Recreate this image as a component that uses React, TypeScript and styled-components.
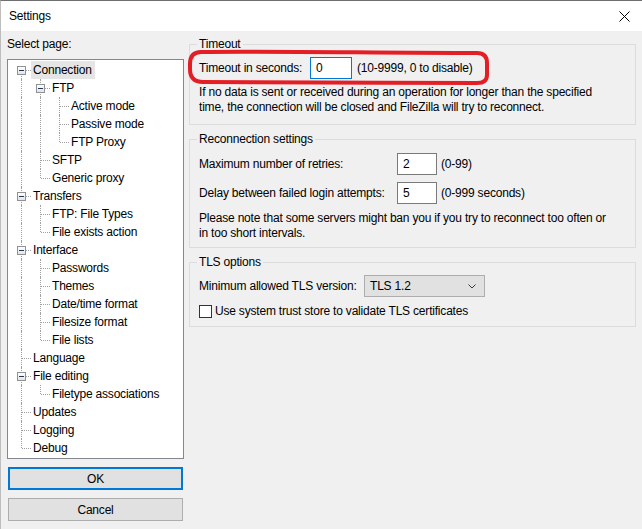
import React from "react";
import styled, { createGlobalStyle, css } from "styled-components";

interface TreeNode {
  label: string;
  selected?: boolean;
  children?: TreeNode[];
}

interface FlatRow {
  label: string;
  selected?: boolean;
  guides: boolean[];
  hasChildren: boolean;
  hasNext: boolean;
  isFirstRoot: boolean;
}

const pages: TreeNode[] = [
  {
    label: "Connection",
    selected: true,
    children: [
      {
        label: "FTP",
        children: [
          { label: "Active mode" },
          { label: "Passive mode" },
          { label: "FTP Proxy" },
        ],
      },
      { label: "SFTP" },
      { label: "Generic proxy" },
    ],
  },
  {
    label: "Transfers",
    children: [{ label: "FTP: File Types" }, { label: "File exists action" }],
  },
  {
    label: "Interface",
    children: [
      { label: "Passwords" },
      { label: "Themes" },
      { label: "Date/time format" },
      { label: "Filesize format" },
      { label: "File lists" },
    ],
  },
  { label: "Language" },
  { label: "File editing", children: [{ label: "Filetype associations" }] },
  { label: "Updates" },
  { label: "Logging" },
  { label: "Debug" },
];

const flatten = (nodes: TreeNode[], guides: boolean[] = []): FlatRow[] =>
  nodes.flatMap((node, i) => {
    const hasNext = i < nodes.length - 1;
    const row: FlatRow = {
      label: node.label,
      selected: node.selected,
      guides,
      hasChildren: !!node.children,
      hasNext,
      isFirstRoot: guides.length === 0 && i === 0,
    };
    return [row, ...(node.children ? flatten(node.children, [...guides, hasNext]) : [])];
  });

const rows = flatten(pages);

const App: React.FC = () => {
  return (
    <>
      <GlobalStyle />
      <Window>
        <TitleBar>
          <Title>Settings</Title>
          <CloseButton>
            <svg width="11" height="11" viewBox="0 0 11 11">
              <path d="M0.5 0.5 L10.5 10.5 M10.5 0.5 L0.5 10.5" stroke="#000" strokeWidth="1" />
            </svg>
          </CloseButton>
        </TitleBar>

        <Body>
          <Sidebar>
            <SectionLabel>Select page:</SectionLabel>
            <TreeBox>
              {rows.map((row) => (
                <TreeRow key={row.label}>
                  {row.guides.map((line, i) => (
                    <Guide key={i} $line={line} />
                  ))}
                  <Branch $top={!row.isFirstRoot} $bottom={row.hasNext}>
                    {row.hasChildren && <Expander />}
                  </Branch>
                  <TreeLabel $selected={row.selected}>{row.label}</TreeLabel>
                </TreeRow>
              ))}
            </TreeBox>
            <DialogButton $default>OK</DialogButton>
            <DialogButton>Cancel</DialogButton>
          </Sidebar>

          <Pages>
            <Group>
              <Legend>Timeout</Legend>
              <FieldRow>
                <FieldLabel $width={104}>Timeout in seconds:</FieldLabel>
                <TextBox $focused $width={42} $gap={7}>0</TextBox>
                <Hint $gap={5}>(10-9999, 0 to disable)</Hint>
              </FieldRow>
              <Note>
                If no data is sent or received during an operation for longer than the specified
                <br />
                time, the connection will be closed and FileZilla will try to reconnect.
              </Note>
            </Group>

            <Group $pad={6}>
              <Legend>Reconnection settings</Legend>
              <FieldGrid>
                <FieldLabel>Maximum number of retries:</FieldLabel>
                <TextBox $width={40} $gap={8}>2</TextBox>
                <Hint $gap={4}>(0-99)</Hint>
                <FieldLabel>Delay between failed login attempts:</FieldLabel>
                <TextBox $width={40} $gap={8}>5</TextBox>
                <Hint $gap={4}>(0-999 seconds)</Hint>
              </FieldGrid>
              <Note $gap={7}>
                Please note that some servers might ban you if you try to reconnect too often or
                <br />
                in too short intervals.
              </Note>
            </Group>

            <Group $pad={7}>
              <Legend>TLS options</Legend>
              <FieldRow>
                <FieldLabel $width={157}>Minimum allowed TLS version:</FieldLabel>
                <Select>
                  <span>TLS 1.2</span>
                  <svg width="8" height="5" viewBox="0 0 8 5">
                    <path d="M0.5 0.5 L4 4 L7.5 0.5" fill="none" stroke="#3c3c3c" strokeWidth="1" />
                  </svg>
                </Select>
              </FieldRow>
              <CheckRow>
                <CheckBox />
                <span>Use system trust store to validate TLS certificates</span>
              </CheckRow>
            </Group>
          </Pages>
        </Body>

        <Annotation width="310" height="42" viewBox="0 0 310 42">
          <path
            d="M16 5 C 80 4, 200 6, 292 6 Q 302 6 302 16 L 302 28 Q 302 36 292 36 C 200 36, 90 35, 18 35 Q 5 35 5 22 L 5 17 Q 5 5 16 5 Z"
            fill="none"
            stroke="#e41e25"
            strokeWidth="4"
            strokeLinejoin="round"
          />
        </Annotation>
      </Window>
    </>
  );
};

const GlobalStyle = createGlobalStyle`
  html, body {
    margin: 0;
    padding: 0;
    background: #f0f0f0;
  }
  body {
    font-family: "Segoe UI", "Liberation Sans", Arial, sans-serif;
    font-size: 12px;
    letter-spacing: -0.2px;
    color: #000;
  }
`;

const Window = styled.div`
  position: relative;
  width: 642px;
  height: 529px;
  box-sizing: border-box;
  background: #f0f0f0;
  border-top: 1px solid #6f6f6f;
  border-left: 1px solid #bdbdbd;
  overflow: hidden;
`;

const TitleBar = styled.div`
  display: flex;
  align-items: center;
  justify-content: space-between;
  height: 30px;
  background: #fff;
  padding-left: 8px;
`;

const Title = styled.div`
  font-size: 12px;
  line-height: 16px;
`;

const CloseButton = styled.div`
  display: flex;
  align-items: center;
  justify-content: center;
  width: 46px;
  height: 30px;
  margin-right: -1px;
  padding-left: 8px;
  box-sizing: border-box;
`;

const Body = styled.div`
  display: flex;
  gap: 5px;
  padding: 6px 0 0 6px;
`;

const Sidebar = styled.div`
  display: flex;
  flex-direction: column;
  width: 177px;
`;

const SectionLabel = styled.div`
  line-height: 14px;
  margin-bottom: 8px;
`;

const TreeBox = styled.div`
  height: 400px;
  box-sizing: border-box;
  border: 1px solid #828790;
  background: #fff;
  padding: 1px 0 0 4px;
  margin-bottom: 8px;
`;

const TreeRow = styled.div`
  display: flex;
  height: 18px;
`;

const dotted = "1px dotted #a0a0a0";

const Guide = styled.div<{ $line: boolean }>`
  position: relative;
  width: 19px;
  flex: none;
  ${(p) =>
    p.$line &&
    css`
      &::before {
        content: "";
        position: absolute;
        left: 9px;
        top: 0;
        bottom: 0;
        border-left: ${dotted};
      }
    `}
`;

const Branch = styled.div<{ $top: boolean; $bottom: boolean }>`
  position: relative;
  width: 19px;
  flex: none;

  &::before {
    content: "";
    position: absolute;
    left: 9px;
    top: ${(p) => (p.$top ? "0" : "9px")};
    bottom: ${(p) => (p.$bottom ? "0" : "9px")};
    border-left: ${dotted};
  }

  &::after {
    content: "";
    position: absolute;
    left: 10px;
    top: 9px;
    width: 9px;
    border-top: ${dotted};
  }
`;

const Expander = styled.div`
  position: absolute;
  left: 5px;
  top: 5px;
  width: 9px;
  height: 9px;
  box-sizing: border-box;
  border: 1px solid #919191;
  background: linear-gradient(#ffffff, #e3e3e3);
  z-index: 1;

  &::after {
    content: "";
    position: absolute;
    left: 1px;
    top: 3px;
    width: 5px;
    height: 1px;
    background: #1e395b;
  }
`;

const TreeLabel = styled.div<{ $selected?: boolean }>`
  line-height: 18px;
  padding: 0 3px 0 2px;
  white-space: nowrap;
  background: ${(p) => (p.$selected ? "#e5e5e5" : "transparent")};
`;

const DialogButton = styled.div<{ $default?: boolean }>`
  display: flex;
  align-items: center;
  justify-content: center;
  height: 23px;
  margin: 0 1px 8px 1px;
  box-sizing: border-box;
  background: #e1e1e1;
  border: ${(p) => (p.$default ? "2px solid #0078d7" : "1px solid #adadad")};
`;

const Pages = styled.div`
  display: flex;
  flex-direction: column;
  gap: 7px;
  width: 447px;
`;

const Group = styled.fieldset<{ $pad?: number }>`
  margin: 0;
  min-width: 0;
  border: 1px solid #dcdcdc;
  padding: 0 9px ${(p) => p.$pad ?? 9}px 9px;
`;

const Legend = styled.legend`
  padding: 0 2px;
  margin-left: -2px;
  line-height: 14px;
`;

const FieldRow = styled.div`
  display: flex;
  align-items: center;
  height: 22px;
  margin-top: 6px;
`;

const FieldGrid = styled.div`
  display: grid;
  grid-template-columns: 190px auto 1fr;
  grid-auto-rows: 22px;
  row-gap: 7px;
  align-items: center;
  margin-top: 7px;
`;

const FieldLabel = styled.div<{ $width?: number }>`
  white-space: nowrap;
  ${(p) => p.$width && `width: ${p.$width}px; flex: none;`}
`;

const TextBox = styled.div<{ $width: number; $gap: number; $focused?: boolean }>`
  width: ${(p) => p.$width}px;
  height: 22px;
  margin-left: ${(p) => p.$gap}px;
  box-sizing: border-box;
  display: flex;
  align-items: center;
  padding-left: 5px;
  background: #fff;
  border: 1px solid ${(p) => (p.$focused ? "#0078d7" : "#7a7a7a")};
`;

const Hint = styled.div<{ $gap: number }>`
  margin-left: ${(p) => p.$gap}px;
  white-space: nowrap;
`;

const Note = styled.p<{ $gap?: number }>`
  margin: ${(p) => p.$gap ?? 6}px 0 0 0;
  line-height: 15px;
  white-space: nowrap;
`;

const Select = styled.div`
  display: flex;
  align-items: center;
  justify-content: space-between;
  width: 121px;
  height: 22px;
  margin-left: 8px;
  box-sizing: border-box;
  padding: 0 8px 0 5px;
  background: #e1e1e1;
  border: 1px solid #adadad;
`;

const CheckRow = styled.div`
  display: flex;
  align-items: center;
  gap: 3px;
  height: 16px;
  margin-top: 6px;
`;

const CheckBox = styled.div`
  width: 13px;
  height: 13px;
  box-sizing: border-box;
  border: 1px solid #333;
  background: #fff;
`;

const Annotation = styled.svg`
  position: absolute;
  left: 184px;
  top: 46px;
  pointer-events: none;
`;

export default App;
